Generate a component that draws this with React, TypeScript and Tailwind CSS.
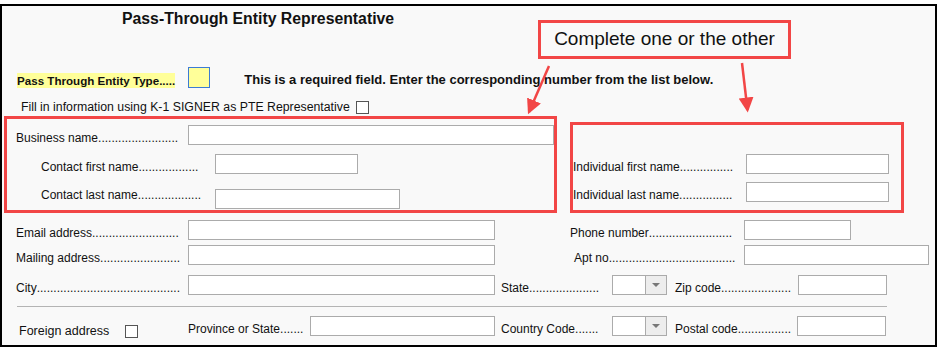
import React from "react";

let ctx: CanvasRenderingContext2D | null = null;
function textWidth(s: string, font: string) {
  if (!ctx) ctx = document.createElement("canvas").getContext("2d");
  if (!ctx) return s.length * 6;
  ctx.font = font;
  return ctx.measureText(s).width;
}

// label text followed by as many leader dots as fit in the given width
function Label({ text, w, className = "" }: { text: string; w: number; className?: string }) {
  const font = '12px "Liberation Sans"';
  const n = Math.max(0, Math.floor((w - textWidth(text, font) - 0.5) / textWidth(".", font)));
  return (
    <div className={`flex whitespace-nowrap text-[12px] leading-[14px] text-[#111] ${className}`}>
      <span>{text}</span>
      <span>{".".repeat(n)}</span>
    </div>
  );
}

function Field({ className = "" }: { className?: string }) {
  return <div className={`h-[20px] bg-white border border-[#ababab] ${className}`} />;
}

function Dropdown({ className = "" }: { className?: string }) {
  return (
    <div className={`flex h-[20px] w-[55px] bg-white border border-[#ababab] ${className}`}>
      <div className="flex-1" />
      <div className="flex w-[21px] items-center justify-center border-l border-[#ababab] bg-[#ededed]">
        <div className="h-0 w-0 border-x-[4px] border-t-[4px] border-x-transparent border-t-[#777]" />
      </div>
    </div>
  );
}

function Check({ className = "" }: { className?: string }) {
  return <div className={`h-[13px] w-[13px] bg-white border border-[#555] ${className}`} />;
}

export default function App() {
  return (
    <div className="h-[348px] w-[938px] bg-white pt-[4px]" style={{ fontFamily: '"Liberation Sans", Arial, sans-serif' }}>
      <div className="relative flex h-[343px] w-[937px] flex-col border-2 border-black bg-[#f9f9f9]">
        {/* title */}
        <div className="h-[61px] pl-[120px]">
          <div className="mt-[4px] text-[15.8px] font-bold leading-[18px] text-[#111]">
            Pass-Through Entity Representative
          </div>
        </div>

        {/* entity type */}
        <div className="flex h-[21px]">
          <span className="ml-[15px] self-end bg-[#ffff99] text-[11.6px] font-bold leading-[15px] text-[#111]">
            Pass Through Entity Type.....
          </span>
          <div className="ml-[13px] h-[21px] w-[22px] border border-[#3c7bd4] bg-[#ffff99]" />
          <span className="ml-[34px] self-end text-[13px] font-bold leading-[16px] text-[#111]">
            This is a required field. Enter the corresponding number from the list below.
          </span>
        </div>

        {/* signer */}
        <div className="flex h-[28px] items-end pb-[2px]">
          <div className="ml-[19px] w-[328px] whitespace-nowrap text-[12.3px] leading-[14px] text-[#111]">
            Fill in information using K-1 SIGNER as PTE Representative
          </div>
          <Check className="ml-[7px]" />
        </div>

        {/* grouped names */}
        <div className="flex h-[97px] items-start">
          <div className="ml-[2px] h-[97px] w-[553px] overflow-hidden border-[3px] border-[#f24646]">
            <div className="mt-[6px] flex h-[20px]">
              <Label text="Business name" w={164} className="ml-[9px] w-[164px] self-end" />
              <Field className="ml-[8px] w-[366px] shrink-0" />
            </div>
            <div className="mt-[9px] flex h-[20px]">
              <Label text="Contact first name" w={161} className="ml-[34px] w-[161px] self-end" />
              <Field className="ml-[13px] w-[143px]" />
            </div>
            <div className="mt-[15px] flex h-[20px]">
              <Label text="Contact last name" w={162} className="-mt-[1px] ml-[34px] w-[162px] self-start" />
              <Field className="ml-[12px] w-[185px]" />
            </div>
          </div>
          <div className="ml-[13px] mt-[6px] h-[91px] w-[334px] border-[3px] border-[#f24646]">
            <div className="mt-[29px] flex h-[20px]">
              <Label text="Individual first name" w={163} className="w-[163px] self-end" />
              <Field className="ml-[10px] w-[143px]" />
            </div>
            <div className="mt-[8px] flex h-[20px]">
              <Label text="Individual last name" w={162} className="w-[162px] self-end" />
              <Field className="ml-[11px] w-[143px]" />
            </div>
          </div>
        </div>

        {/* email / phone */}
        <div className="mt-[7px] flex h-[20px]">
          <Label text="Email address" w={164} className="ml-[14px] w-[164px] self-end" />
          <Field className="ml-[8px] w-[307px]" />
          <Label text="Phone number" w={163} className="ml-[75px] w-[163px] self-end" />
          <Field className="ml-[11px] w-[107px]" />
        </div>

        {/* mailing / apt */}
        <div className="mt-[5px] flex h-[20px]">
          <Label text="Mailing address" w={165} className="ml-[14px] w-[165px] self-end" />
          <Field className="ml-[7px] w-[307px]" />
          <Label text="Apt no" w={163} className="ml-[79px] w-[163px] self-end" />
          <Field className="ml-[7px] w-[185px]" />
        </div>

        {/* city / state / zip */}
        <div className="mt-[10px] flex h-[20px]">
          <Label text="City" w={165} className="ml-[14px] w-[165px] self-end" />
          <Field className="ml-[7px] w-[307px]" />
          <Label text="State" w={100} className="ml-[6px] w-[100px] self-end" />
          <Dropdown className="ml-[11px]" />
          <Label text="Zip code" w={118} className="ml-[8px] w-[118px] self-end" />
          <Field className="ml-[5px] w-[89px]" />
        </div>

        <div className="ml-[15px] mt-[11px] h-px w-[870px] bg-[#b4b4b4]" />

        {/* foreign */}
        <div className="mt-[9px] flex h-[20px]">
          <div className="ml-[17px] mt-[8px] w-[106px] self-start whitespace-nowrap text-[12.5px] leading-[14px] text-[#111]">
            Foreign address
          </div>
          <Check className="mt-[9px] self-start" />
          <Label text="Province or State" w={119} className="ml-[50px] w-[119px] self-end" />
          <Field className="ml-[3px] w-[185px]" />
          <Label text="Country Code" w={100} className="ml-[6px] w-[100px] self-end" />
          <Dropdown className="ml-[11px]" />
          <Label text="Postal code" w={118} className="ml-[8px] w-[118px] self-end" />
          <Field className="ml-[4px] w-[89px]" />
        </div>

        {/* annotation callout */}
        <div className="absolute left-[536px] top-[14px] flex h-[39px] w-[253px] items-center justify-center border-[3px] border-[#f24646] bg-[#f9f9f9] text-[19px] text-[#111]">
          Complete one or the other
        </div>
        <svg className="pointer-events-none absolute left-0 top-0" width="933" height="339">
          <defs>
            <marker id="ah" markerWidth="6" markerHeight="6" refX="5" refY="3" orient="auto" markerUnits="strokeWidth">
              <path d="M0,0 L6,3 L0,6 Z" fill="#f24646" />
            </marker>
          </defs>
          <line x1="547" y1="60" x2="527" y2="106" stroke="#f24646" strokeWidth="2.5" markerEnd="url(#ah)" />
          <line x1="740" y1="57" x2="745.5" y2="104" stroke="#f24646" strokeWidth="2.5" markerEnd="url(#ah)" />
        </svg>
      </div>
    </div>
  );
}
